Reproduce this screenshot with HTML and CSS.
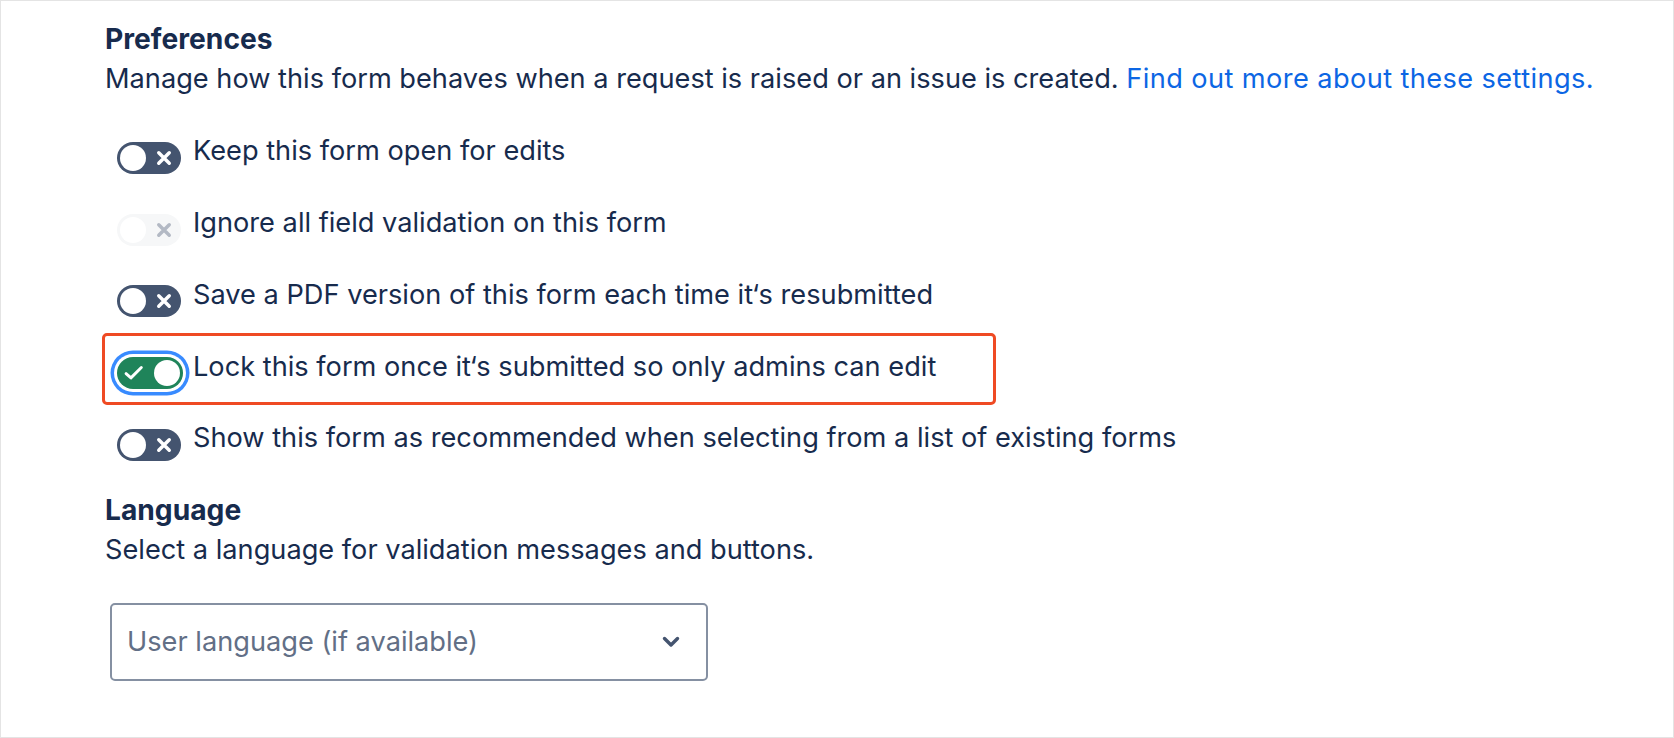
FILE: index.html
```html
<!DOCTYPE html>
<html lang="en">
<head>
<meta charset="utf-8">
<title>Form preferences</title>
<link rel="stylesheet" href="styles.css">
</head>
<body>
<div class="page">
  <section class="section">
    <h2 class="heading">Preferences</h2>
    <p class="desc">Manage how this form behaves when a request is raised or an issue is created. <a class="link" href="#">Find out more about these settings.</a></p>
    <ul class="toggles">
      <li class="row">
        <span class="toggle"><span class="knob"></span><svg class="icon cross" viewBox="0 0 16 16"><path d="M4.5 4.5 11.5 11.5M11.5 4.5 4.5 11.5"/></svg></span>
        <span class="label">Keep this form open for edits</span>
      </li>
      <li class="row">
        <span class="toggle disabled"><span class="knob"></span><svg class="icon cross" viewBox="0 0 16 16"><path d="M4.5 4.5 11.5 11.5M11.5 4.5 4.5 11.5"/></svg></span>
        <span class="label">Ignore all field validation on this form</span>
      </li>
      <li class="row">
        <span class="toggle"><span class="knob"></span><svg class="icon cross" viewBox="0 0 16 16"><path d="M4.5 4.5 11.5 11.5M11.5 4.5 4.5 11.5"/></svg></span>
        <span class="label">Save a PDF version of this form each time it‘s resubmitted</span>
      </li>
      <li class="row marked">
        <span class="toggle checked"><svg class="icon check" viewBox="0 0 18 14"><path d="M2.5 7.5 6.5 11 15 2.5"/></svg><span class="knob"></span></span>
        <span class="label">Lock this form once it‘s submitted so only admins can edit</span>
      </li>
      <li class="row">
        <span class="toggle"><span class="knob"></span><svg class="icon cross" viewBox="0 0 16 16"><path d="M4.5 4.5 11.5 11.5M11.5 4.5 4.5 11.5"/></svg></span>
        <span class="label">Show this form as recommended when selecting from a list of existing forms</span>
      </li>
    </ul>
  </section>
  <section class="section lang">
    <h2 class="heading">Language</h2>
    <p class="desc">Select a language for validation messages and buttons.</p>
    <div class="select">
      <span class="select-value">User language (if available)</span>
      <svg class="chevron" viewBox="0 0 18 12"><path d="M2.5 2.5 9 9 15.5 2.5"/></svg>
    </div>
  </section>
</div>
</body>
</html>
```
FILE: styles.css
```css
* { box-sizing: border-box; }
html, body { margin: 0; padding: 0; background: #ffffff; }
body {
  font-family: Inter, "Noto Sans", "Liberation Sans", sans-serif;
  color: #172b4d;
}
.page {
  width: 1674px;
  height: 738px;
  border: 1px solid #e4e4e4;
  padding: 20px 0 0 104px;
  overflow: hidden;
}
.heading {
  margin: 0 0 4px 0;
  font-size: 28.2px;
  font-weight: 700;
  line-height: 36px;
  color: #172b4d;
}
.desc {
  margin: 0;
  font-size: 27.2px;
  line-height: 36px;
  color: #172b4d;
}
.link {
  color: #0c66e4;
  text-decoration: none;
  letter-spacing: 0.4px;
}
.toggles {
  list-style: none;
  margin: 25px 0 0 12px;
  padding: 0;
}
.row {
  position: relative;
  display: flex;
  align-items: center;
  height: 71.75px;
  gap: 12px;
}
.label {
  font-size: 27.2px;
  line-height: 36px;
  margin-bottom: 13px;
  white-space: nowrap;
}
.toggle {
  position: relative;
  flex: none;
  display: flex;
  align-items: center;
  justify-content: space-between;
  width: 64px;
  height: 32px;
  padding: 0 3px;
  border-radius: 16px;
  background: #44546f;
}
.knob {
  width: 26px;
  height: 26px;
  border-radius: 50%;
  background: #ffffff;
}
.icon {
  width: 24px;
  height: 24px;
  fill: none;
  stroke: #ffffff;
  stroke-linecap: round;
  stroke-linejoin: round;
}
.cross { stroke-width: 2.3; margin-right: 2px; }
.check { width: 22px; height: 18px; stroke-width: 2.4; margin-left: 3px; }
.toggle.disabled { background: #f6f7f8; }
.toggle.disabled .icon { stroke: #b3b9c4; }
.toggle.checked {
  width: 66px;
  background: #1f845a;
  box-shadow: 0 0 0 3px #ffffff, 0 0 0 6.5px #388bff;
}
/* annotation frame drawn over the highlighted row */
.marked::after {
  content: "";
  position: absolute;
  left: -15px;
  top: -4px;
  width: 888px;
  height: 66px;
  border: 3px solid #ef4a23;
  border-radius: 5px;
  pointer-events: none;
}
.marked { gap: 10px; }
.lang { margin-top: 11px; }
.select {
  display: flex;
  align-items: center;
  justify-content: space-between;
  width: 598px;
  height: 78px;
  margin: 35px 0 0 5px;
  padding: 0 26px 0 15px;
  border: 2px solid #8590a2;
  border-radius: 5px;
  background: #ffffff;
}
.select-value {
  font-size: 27.2px;
  line-height: 36px;
  color: #626f86;
}
.chevron {
  width: 18px;
  height: 12px;
  fill: none;
  stroke: #44546f;
  stroke-width: 3.4;
  stroke-linecap: round;
  stroke-linejoin: round;
}
```
